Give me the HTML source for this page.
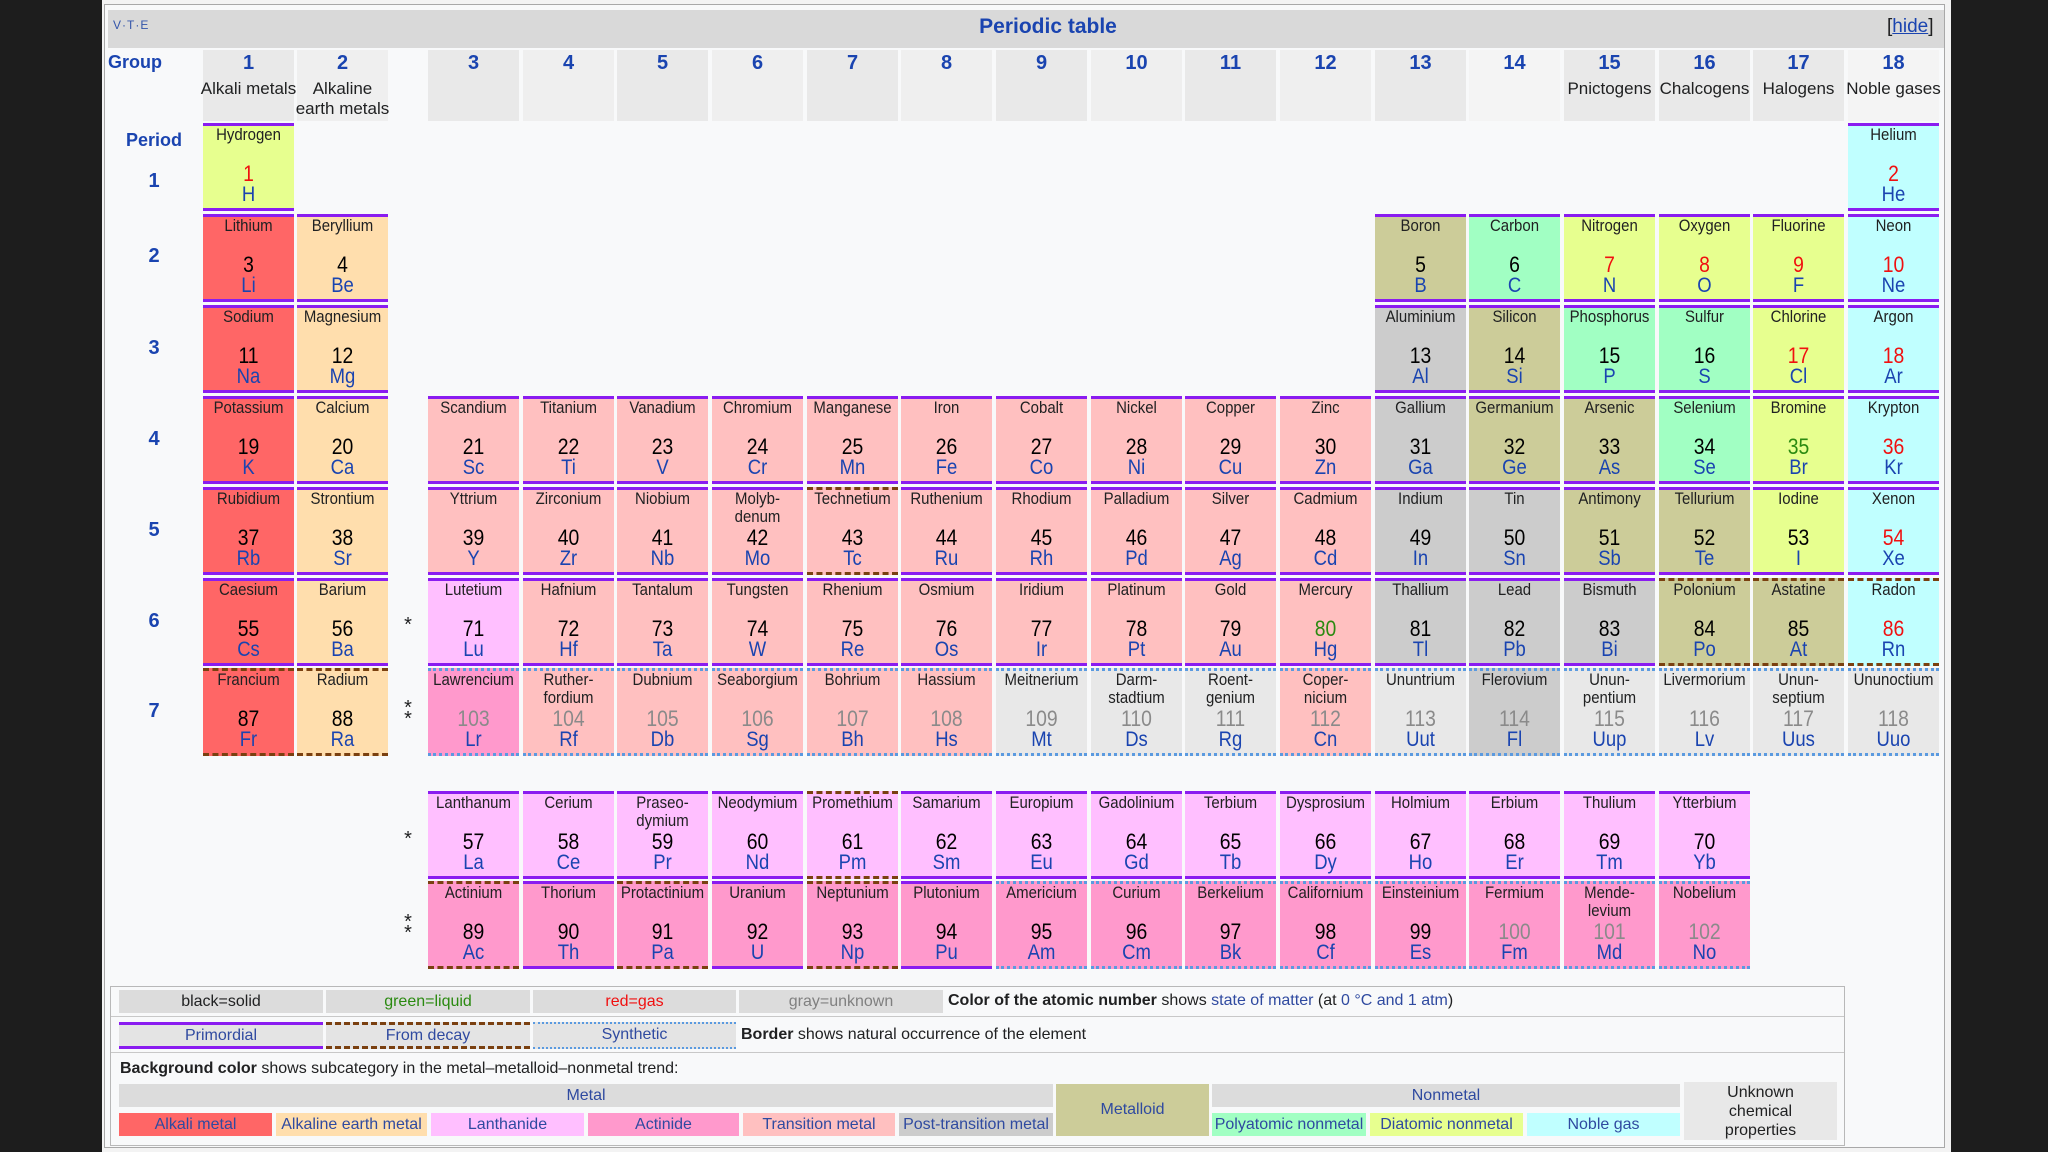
<!DOCTYPE html>
<html><head><meta charset="utf-8"><style>
body{margin:0;width:2048px;height:1152px;background:#1d1d1d;position:relative;overflow:hidden;font-family:"Liberation Sans",Arial,sans-serif}
#fr{position:absolute;left:102px;top:0;width:1849px;height:1152px;background:#f3f3f3}
#in{position:absolute;left:104px;top:4px;width:1841px;height:1144px;border:1px solid #a8a8a8;background:#f8f9fa;box-sizing:border-box}
#tb{position:absolute;left:108px;top:10px;width:1836px;height:38px;background:#d9d9d9}
.a{position:absolute}
.e{position:absolute;width:91px;height:88px;box-sizing:border-box;border-top:3px solid #8a1cf0;border-bottom:3px solid #8a1cf0;text-align:center}
.e.d{border-top:3px dashed #7a4010;border-bottom:3px dashed #7a4010}
.e.s{border-top:3px dotted #5a9ae0;border-bottom:3px dotted #5a9ae0}
.e i,.e b,.e u{position:absolute;left:-10px;right:-10px;display:block;font-style:normal;text-decoration:none;font-weight:normal;transform:scaleX(.88)}
.e i{top:0;font-size:17px;line-height:18px;color:#202122}
.e b{top:37px;font-size:22px;line-height:22px;color:#000}
.e u{top:58px;font-size:21px;line-height:22px;color:#1a44b0}
.g b{color:#f01010}.l b{color:#2a8a10}.k b{color:#8a8a8a}
.am{background:#ff6666}.ae{background:#ffdead}.ln{background:#ffbfff}.ac{background:#ff99cc}.tm{background:#ffc0c0}.pt{background:#cccccc}.ml{background:#cccc99}.pn{background:#a1ffc3}.dn{background:#e7ff8f}.ng{background:#c0ffff}.uk{background:#e8e8e8}
.x1{left:203px}.x2{left:297px}.x3{left:428px}.x4{left:523px}.x5{left:617px}.x6{left:712px}.x7{left:807px}.x8{left:901px}.x9{left:996px}.x10{left:1091px}.x11{left:1185px}.x12{left:1280px}.x13{left:1375px}.x14{left:1469px}.x15{left:1564px}.x16{left:1659px}.x17{left:1753px}.x18{left:1848px}
.y1{top:123px}.y2{top:214px}.y3{top:305px}.y4{top:396px}.y5{top:487px}.y6{top:578px}.y7{top:668px}.y8{top:791px}.y9{top:881px}
.gh{position:absolute;top:50px;width:91px;height:71px;background:#e9e9e9;text-align:center}
.gh.o{background:#efefef}
.gh b{display:block;height:29px;line-height:27px;font-size:20px;color:#1a44b0}
.gh span{display:block;font-size:17px;line-height:20px;color:#202122;margin:0 -12px}
.pn2{position:absolute;left:134px;width:40px;text-align:center;font-weight:bold;font-size:20px;color:#1a44b0}
.st{position:absolute;left:398px;width:20px;text-align:center;font-size:20px;color:#202122;line-height:11px}
.lc{position:absolute;height:23px;line-height:23px;font-size:16px;text-align:center;box-sizing:border-box;color:#2f4aa0}
</style></head><body>
<div id="fr"></div><div id="in"></div><div id="tb"></div>
<div class="a" style="left:113px;top:18px;font-size:12px;color:#3355aa;letter-spacing:1px">V·T·E</div>
<div class="a" style="left:0;width:2096px;top:15px;text-align:center;font-size:21px;font-weight:bold;color:#1a44b0">Periodic table</div>
<div class="a" style="left:1887px;top:16px;font-size:19px;color:#202122">[<span style="color:#1a44b0;text-decoration:underline">hide</span>]</div>
<div class="a" style="left:108px;top:52px;font-size:18px;font-weight:bold;color:#1a44b0">Group</div>
<div class="a" style="left:126px;top:130px;font-size:18px;font-weight:bold;color:#1a44b0">Period</div>

<div class="gh x1"><b>1</b><span>Alkali metals</span></div>
<div class="gh o x2"><b>2</b><span>Alkaline<br>earth metals</span></div>
<div class="gh x3"><b>3</b></div><div class="gh o x4"><b>4</b></div><div class="gh x5"><b>5</b></div><div class="gh o x6"><b>6</b></div><div class="gh x7"><b>7</b></div><div class="gh o x8"><b>8</b></div><div class="gh x9"><b>9</b></div><div class="gh o x10"><b>10</b></div><div class="gh x11"><b>11</b></div><div class="gh o x12"><b>12</b></div><div class="gh x13"><b>13</b></div><div class="gh o x14" style="background:#f4f4f4"><b>14</b></div>
<div class="gh x15"><b>15</b><span>Pnictogens</span></div><div class="gh x16"><b>16</b><span>Chalcogens</span></div><div class="gh x17"><b>17</b><span>Halogens</span></div><div class="gh o x18" style="background:#f4f4f4"><b>18</b><span>Noble gases</span></div>

<div class="pn2" style="top:170px">1</div><div class="pn2" style="top:245px">2</div><div class="pn2" style="top:337px">3</div><div class="pn2" style="top:428px">4</div><div class="pn2" style="top:519px">5</div><div class="pn2" style="top:610px">6</div><div class="pn2" style="top:700px">7</div>
<div class="st" style="top:620px">*</div>
<div class="st" style="top:703px">*<br>*</div>
<div class="st" style="top:834px">*</div>
<div class="st" style="top:917px">*<br>*</div>

<div class="e dn g x1 y1"><i>Hydrogen</i><b>1</b><u>H</u></div>
<div class="e ng g x18 y1"><i>Helium</i><b>2</b><u>He</u></div>
<div class="e am x1 y2"><i>Lithium</i><b>3</b><u>Li</u></div>
<div class="e ae x2 y2"><i>Beryllium</i><b>4</b><u>Be</u></div>
<div class="e ml x13 y2"><i>Boron</i><b>5</b><u>B</u></div>
<div class="e pn x14 y2"><i>Carbon</i><b>6</b><u>C</u></div>
<div class="e dn g x15 y2"><i>Nitrogen</i><b>7</b><u>N</u></div>
<div class="e dn g x16 y2"><i>Oxygen</i><b>8</b><u>O</u></div>
<div class="e dn g x17 y2"><i>Fluorine</i><b>9</b><u>F</u></div>
<div class="e ng g x18 y2"><i>Neon</i><b>10</b><u>Ne</u></div>
<div class="e am x1 y3"><i>Sodium</i><b>11</b><u>Na</u></div>
<div class="e ae x2 y3"><i>Magnesium</i><b>12</b><u>Mg</u></div>
<div class="e pt x13 y3"><i>Aluminium</i><b>13</b><u>Al</u></div>
<div class="e ml x14 y3"><i>Silicon</i><b>14</b><u>Si</u></div>
<div class="e pn x15 y3"><i>Phosphorus</i><b>15</b><u>P</u></div>
<div class="e pn x16 y3"><i>Sulfur</i><b>16</b><u>S</u></div>
<div class="e dn g x17 y3"><i>Chlorine</i><b>17</b><u>Cl</u></div>
<div class="e ng g x18 y3"><i>Argon</i><b>18</b><u>Ar</u></div>
<div class="e am x1 y4"><i>Potassium</i><b>19</b><u>K</u></div>
<div class="e ae x2 y4"><i>Calcium</i><b>20</b><u>Ca</u></div>
<div class="e tm x3 y4"><i>Scandium</i><b>21</b><u>Sc</u></div>
<div class="e tm x4 y4"><i>Titanium</i><b>22</b><u>Ti</u></div>
<div class="e tm x5 y4"><i>Vanadium</i><b>23</b><u>V</u></div>
<div class="e tm x6 y4"><i>Chromium</i><b>24</b><u>Cr</u></div>
<div class="e tm x7 y4"><i>Manganese</i><b>25</b><u>Mn</u></div>
<div class="e tm x8 y4"><i>Iron</i><b>26</b><u>Fe</u></div>
<div class="e tm x9 y4"><i>Cobalt</i><b>27</b><u>Co</u></div>
<div class="e tm x10 y4"><i>Nickel</i><b>28</b><u>Ni</u></div>
<div class="e tm x11 y4"><i>Copper</i><b>29</b><u>Cu</u></div>
<div class="e tm x12 y4"><i>Zinc</i><b>30</b><u>Zn</u></div>
<div class="e pt x13 y4"><i>Gallium</i><b>31</b><u>Ga</u></div>
<div class="e ml x14 y4"><i>Germanium</i><b>32</b><u>Ge</u></div>
<div class="e ml x15 y4"><i>Arsenic</i><b>33</b><u>As</u></div>
<div class="e pn x16 y4"><i>Selenium</i><b>34</b><u>Se</u></div>
<div class="e dn l x17 y4"><i>Bromine</i><b>35</b><u>Br</u></div>
<div class="e ng g x18 y4"><i>Krypton</i><b>36</b><u>Kr</u></div>
<div class="e am x1 y5"><i>Rubidium</i><b>37</b><u>Rb</u></div>
<div class="e ae x2 y5"><i>Strontium</i><b>38</b><u>Sr</u></div>
<div class="e tm x3 y5"><i>Yttrium</i><b>39</b><u>Y</u></div>
<div class="e tm x4 y5"><i>Zirconium</i><b>40</b><u>Zr</u></div>
<div class="e tm x5 y5"><i>Niobium</i><b>41</b><u>Nb</u></div>
<div class="e tm x6 y5"><i>Molyb-<br>denum</i><b>42</b><u>Mo</u></div>
<div class="e tm d x7 y5"><i>Technetium</i><b>43</b><u>Tc</u></div>
<div class="e tm x8 y5"><i>Ruthenium</i><b>44</b><u>Ru</u></div>
<div class="e tm x9 y5"><i>Rhodium</i><b>45</b><u>Rh</u></div>
<div class="e tm x10 y5"><i>Palladium</i><b>46</b><u>Pd</u></div>
<div class="e tm x11 y5"><i>Silver</i><b>47</b><u>Ag</u></div>
<div class="e tm x12 y5"><i>Cadmium</i><b>48</b><u>Cd</u></div>
<div class="e pt x13 y5"><i>Indium</i><b>49</b><u>In</u></div>
<div class="e pt x14 y5"><i>Tin</i><b>50</b><u>Sn</u></div>
<div class="e ml x15 y5"><i>Antimony</i><b>51</b><u>Sb</u></div>
<div class="e ml x16 y5"><i>Tellurium</i><b>52</b><u>Te</u></div>
<div class="e dn x17 y5"><i>Iodine</i><b>53</b><u>I</u></div>
<div class="e ng g x18 y5"><i>Xenon</i><b>54</b><u>Xe</u></div>
<div class="e am x1 y6"><i>Caesium</i><b>55</b><u>Cs</u></div>
<div class="e ae x2 y6"><i>Barium</i><b>56</b><u>Ba</u></div>
<div class="e ln x3 y6"><i>Lutetium</i><b>71</b><u>Lu</u></div>
<div class="e tm x4 y6"><i>Hafnium</i><b>72</b><u>Hf</u></div>
<div class="e tm x5 y6"><i>Tantalum</i><b>73</b><u>Ta</u></div>
<div class="e tm x6 y6"><i>Tungsten</i><b>74</b><u>W</u></div>
<div class="e tm x7 y6"><i>Rhenium</i><b>75</b><u>Re</u></div>
<div class="e tm x8 y6"><i>Osmium</i><b>76</b><u>Os</u></div>
<div class="e tm x9 y6"><i>Iridium</i><b>77</b><u>Ir</u></div>
<div class="e tm x10 y6"><i>Platinum</i><b>78</b><u>Pt</u></div>
<div class="e tm x11 y6"><i>Gold</i><b>79</b><u>Au</u></div>
<div class="e tm l x12 y6"><i>Mercury</i><b>80</b><u>Hg</u></div>
<div class="e pt x13 y6"><i>Thallium</i><b>81</b><u>Tl</u></div>
<div class="e pt x14 y6"><i>Lead</i><b>82</b><u>Pb</u></div>
<div class="e pt x15 y6"><i>Bismuth</i><b>83</b><u>Bi</u></div>
<div class="e ml d x16 y6"><i>Polonium</i><b>84</b><u>Po</u></div>
<div class="e ml d x17 y6"><i>Astatine</i><b>85</b><u>At</u></div>
<div class="e ng g d x18 y6"><i>Radon</i><b>86</b><u>Rn</u></div>
<div class="e am d x1 y7"><i>Francium</i><b>87</b><u>Fr</u></div>
<div class="e ae d x2 y7"><i>Radium</i><b>88</b><u>Ra</u></div>
<div class="e ac s k x3 y7"><i>Lawrencium</i><b>103</b><u>Lr</u></div>
<div class="e tm s k x4 y7"><i>Ruther-<br>fordium</i><b>104</b><u>Rf</u></div>
<div class="e tm s k x5 y7"><i>Dubnium</i><b>105</b><u>Db</u></div>
<div class="e tm s k x6 y7"><i>Seaborgium</i><b>106</b><u>Sg</u></div>
<div class="e tm s k x7 y7"><i>Bohrium</i><b>107</b><u>Bh</u></div>
<div class="e tm s k x8 y7"><i>Hassium</i><b>108</b><u>Hs</u></div>
<div class="e uk s k x9 y7"><i>Meitnerium</i><b>109</b><u>Mt</u></div>
<div class="e uk s k x10 y7"><i>Darm-<br>stadtium</i><b>110</b><u>Ds</u></div>
<div class="e uk s k x11 y7"><i>Roent-<br>genium</i><b>111</b><u>Rg</u></div>
<div class="e tm s k x12 y7"><i>Coper-<br>nicium</i><b>112</b><u>Cn</u></div>
<div class="e uk s k x13 y7"><i>Ununtrium</i><b>113</b><u>Uut</u></div>
<div class="e pt s k x14 y7"><i>Flerovium</i><b>114</b><u>Fl</u></div>
<div class="e uk s k x15 y7"><i>Unun-<br>pentium</i><b>115</b><u>Uup</u></div>
<div class="e uk s k x16 y7"><i>Livermorium</i><b>116</b><u>Lv</u></div>
<div class="e uk s k x17 y7"><i>Unun-<br>septium</i><b>117</b><u>Uus</u></div>
<div class="e uk s k x18 y7"><i>Ununoctium</i><b>118</b><u>Uuo</u></div>
<div class="e ln x3 y8"><i>Lanthanum</i><b>57</b><u>La</u></div>
<div class="e ln x4 y8"><i>Cerium</i><b>58</b><u>Ce</u></div>
<div class="e ln x5 y8"><i>Praseo-<br>dymium</i><b>59</b><u>Pr</u></div>
<div class="e ln x6 y8"><i>Neodymium</i><b>60</b><u>Nd</u></div>
<div class="e ln d x7 y8"><i>Promethium</i><b>61</b><u>Pm</u></div>
<div class="e ln x8 y8"><i>Samarium</i><b>62</b><u>Sm</u></div>
<div class="e ln x9 y8"><i>Europium</i><b>63</b><u>Eu</u></div>
<div class="e ln x10 y8"><i>Gadolinium</i><b>64</b><u>Gd</u></div>
<div class="e ln x11 y8"><i>Terbium</i><b>65</b><u>Tb</u></div>
<div class="e ln x12 y8"><i>Dysprosium</i><b>66</b><u>Dy</u></div>
<div class="e ln x13 y8"><i>Holmium</i><b>67</b><u>Ho</u></div>
<div class="e ln x14 y8"><i>Erbium</i><b>68</b><u>Er</u></div>
<div class="e ln x15 y8"><i>Thulium</i><b>69</b><u>Tm</u></div>
<div class="e ln x16 y8"><i>Ytterbium</i><b>70</b><u>Yb</u></div>
<div class="e ac d x3 y9"><i>Actinium</i><b>89</b><u>Ac</u></div>
<div class="e ac x4 y9"><i>Thorium</i><b>90</b><u>Th</u></div>
<div class="e ac d x5 y9"><i>Protactinium</i><b>91</b><u>Pa</u></div>
<div class="e ac x6 y9"><i>Uranium</i><b>92</b><u>U</u></div>
<div class="e ac d x7 y9"><i>Neptunium</i><b>93</b><u>Np</u></div>
<div class="e ac x8 y9"><i>Plutonium</i><b>94</b><u>Pu</u></div>
<div class="e ac s x9 y9"><i>Americium</i><b>95</b><u>Am</u></div>
<div class="e ac s x10 y9"><i>Curium</i><b>96</b><u>Cm</u></div>
<div class="e ac s x11 y9"><i>Berkelium</i><b>97</b><u>Bk</u></div>
<div class="e ac s x12 y9"><i>Californium</i><b>98</b><u>Cf</u></div>
<div class="e ac s x13 y9"><i>Einsteinium</i><b>99</b><u>Es</u></div>
<div class="e ac s k x14 y9"><i>Fermium</i><b>100</b><u>Fm</u></div>
<div class="e ac s k x15 y9"><i>Mende-<br>levium</i><b>101</b><u>Md</u></div>
<div class="e ac s k x16 y9"><i>Nobelium</i><b>102</b><u>No</u></div>

<div class="a" style="left:110px;top:986px;width:1735px;height:160px;border:1px solid #b8b8b8;box-sizing:border-box;background:#f8f9fa"></div>
<div class="a" style="left:111px;top:1016px;width:1733px;height:1px;background:#c8c8c8"></div>
<div class="a" style="left:111px;top:1052px;width:1733px;height:1px;background:#c8c8c8"></div>
<div class="lc" style="left:119px;top:990px;width:204px;background:#dcdcdc;color:#202122">black=solid</div>
<div class="lc" style="left:326px;top:990px;width:204px;background:#dcdcdc;color:#2a8a10">green=liquid</div>
<div class="lc" style="left:533px;top:990px;width:203px;background:#dcdcdc;color:#f01010">red=gas</div>
<div class="lc" style="left:739px;top:990px;width:204px;background:#dcdcdc;color:#808080">gray=unknown</div>
<div class="a" style="left:948px;top:992px;font-size:16px;color:#202122"><b>Color of the atomic number</b> shows <span style="color:#2f4aa0">state of matter</span> (at <span style="color:#2f4aa0">0 °C and 1 atm</span>)</div>
<div class="lc" style="left:119px;top:1022px;width:204px;height:27px;line-height:21px;background:#e4e4e4;border-top:3px solid #8a1cf0;border-bottom:3px solid #8a1cf0">Primordial</div>
<div class="lc" style="left:326px;top:1022px;width:204px;height:27px;line-height:21px;background:#e4e4e4;border-top:3px dashed #7a4010;border-bottom:3px dashed #7a4010">From decay</div>
<div class="lc" style="left:533px;top:1022px;width:203px;height:27px;line-height:21px;background:#e4e4e4;border-top:2px dotted #5a9ae0;border-bottom:2px dotted #5a9ae0">Synthetic</div>
<div class="a" style="left:741px;top:1026px;font-size:16px;color:#202122"><b>Border</b> shows natural occurrence of the element</div>
<div class="a" style="left:120px;top:1060px;font-size:16px;color:#202122"><b>Background color</b> shows subcategory in the metal–metalloid–nonmetal trend:</div>
<div class="lc" style="left:119px;top:1084px;width:934px;background:#dcdcdc">Metal</div>
<div class="lc am" style="left:119px;top:1113px;width:153px">Alkali metal</div>
<div class="lc ae" style="left:276px;top:1113px;width:151px">Alkaline earth metal</div>
<div class="lc ln" style="left:431px;top:1113px;width:153px">Lanthanide</div>
<div class="lc ac" style="left:588px;top:1113px;width:151px">Actinide</div>
<div class="lc tm" style="left:743px;top:1113px;width:152px">Transition metal</div>
<div class="lc pt" style="left:899px;top:1113px;width:154px">Post-transition metal</div>
<div class="lc ml" style="left:1056px;top:1084px;width:153px;height:52px;line-height:52px">Metalloid</div>
<div class="lc" style="left:1212px;top:1084px;width:468px;background:#dcdcdc">Nonmetal</div>
<div class="lc pn" style="left:1212px;top:1113px;width:154px">Polyatomic nonmetal</div>
<div class="lc dn" style="left:1370px;top:1113px;width:153px">Diatomic nonmetal</div>
<div class="lc ng" style="left:1527px;top:1113px;width:153px">Noble gas</div>
<div class="lc uk" style="left:1684px;top:1082px;width:153px;height:58px;line-height:19px;color:#202122;padding-top:1px">Unknown<br>chemical<br>properties</div>
</body></html>
